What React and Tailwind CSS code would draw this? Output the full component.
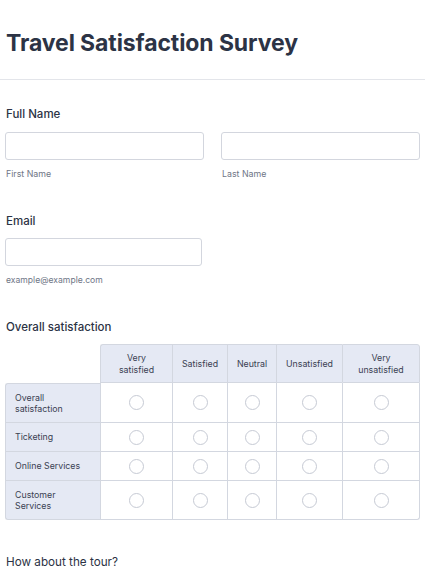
import React from "react";

const cols = ["Very satisfied", "Satisfied", "Neutral", "Unsatisfied", "Very unsatisfied"];
const colLabels = [["Very", "satisfied"], ["Satisfied"], ["Neutral"], ["Unsatisfied"], ["Very", "unsatisfied"]];
const rows = [
  { label: ["Overall", "satisfaction"], h: "h-[40px]" },
  { label: ["Ticketing"], h: "h-[29px]" },
  { label: ["Online Services"], h: "h-[29px]" },
  { label: ["Customer", "Services"], h: "h-[39px]" },
];

function Radio() {
  return <span className="block w-[15px] h-[15px] rounded-full border border-[#c6cad4] bg-white" />;
}

export default function App() {
  return (
    <div className="w-[425px] min-h-[575px] bg-white text-[#2c3345]" style={{ fontFamily: "Inter, 'Noto Sans', sans-serif" }}>
      <div className="px-[6px] pt-[26px] pb-[19px]">
        <h1 className="text-[23px] leading-[34px] font-bold tracking-[-0.1px] text-[#2c3345]">Travel Satisfaction Survey</h1>
      </div>
      <div className="border-t border-[#e3e5ea]" />

      <div className="px-[5px]">
        <div className="mt-[26px] text-[11.5px] leading-[16px] font-medium pl-[1px]">Full Name</div>
        <div className="mt-[10px] flex gap-[17px]">
          <div className="w-[199px]">
            <div className="h-[28px] rounded-[3px] border border-[#d3d6de] bg-white" />
            <div className="mt-[8px] text-[8.8px] leading-[12px] text-[#6f7686] pl-[1px]">First Name</div>
          </div>
          <div className="w-[199px]">
            <div className="h-[28px] rounded-[3px] border border-[#d3d6de] bg-white" />
            <div className="mt-[8px] text-[8.8px] leading-[12px] text-[#6f7686] pl-[1px]">Last Name</div>
          </div>
        </div>

        <div className="mt-[33px] text-[11.5px] leading-[16px] font-medium pl-[1px]">Email</div>
        <div className="mt-[9px] w-[197px] h-[28px] rounded-[3px] border border-[#d3d6de] bg-white" />
        <div className="mt-[8px] text-[8.6px] leading-[12px] text-[#6f7686] pl-[1px]">example@example.com</div>

        <div className="mt-[33px] text-[11.5px] leading-[16px] font-medium pl-[1px]">Overall satisfaction</div>

        <div className="mt-[9px] grid grid-cols-[95px_72px_55px_49px_66px_78px] text-[8.8px] leading-[11.5px] text-[#3a4152]">
          <div className="h-[39px]" />
          {colLabels.map((c, i) => (
            <div
              key={i}
              className={
                "h-[39px] flex flex-col items-center justify-center text-center bg-[#e5e9f4] border-t border-b border-l border-[#d3d7e0] " +
                (i === 0 ? "rounded-tl-[3px] " : "") +
                (i === 4 ? "border-r rounded-tr-[3px]" : "")
              }
            >
              {c.map((t, j) => (
                <span key={j}>{t}</span>
              ))}
            </div>
          ))}
          {rows.map((r, ri) => (
            <React.Fragment key={ri}>
              <div
                className={
                  r.h +
                  " flex flex-col justify-center pl-[9px] bg-[#e5e9f4] border-l border-b border-[#d3d7e0] " +
                  (ri === 0 ? "border-t rounded-tl-[3px] " : "") +
                  (ri === rows.length - 1 ? "rounded-bl-[3px]" : "")
                }
              >
                {r.label.map((t, j) => (
                  <span key={j}>{t}</span>
                ))}
              </div>
              {cols.map((c, ci) => (
                <div
                  key={ci}
                  className={
                    r.h +
                    " flex items-center justify-center bg-white border-l border-b border-[#d3d7e0] " +
                    (ci === 4 ? "border-r " : "") +
                    (ci === 4 && ri === rows.length - 1 ? "rounded-br-[3px]" : "")
                  }
                >
                  <Radio />
                </div>
              ))}
            </React.Fragment>
          ))}
        </div>

        <div className="mt-[34px] text-[11.7px] leading-[16px] pl-[1px]">How about the tour?</div>
      </div>
    </div>
  );
}
